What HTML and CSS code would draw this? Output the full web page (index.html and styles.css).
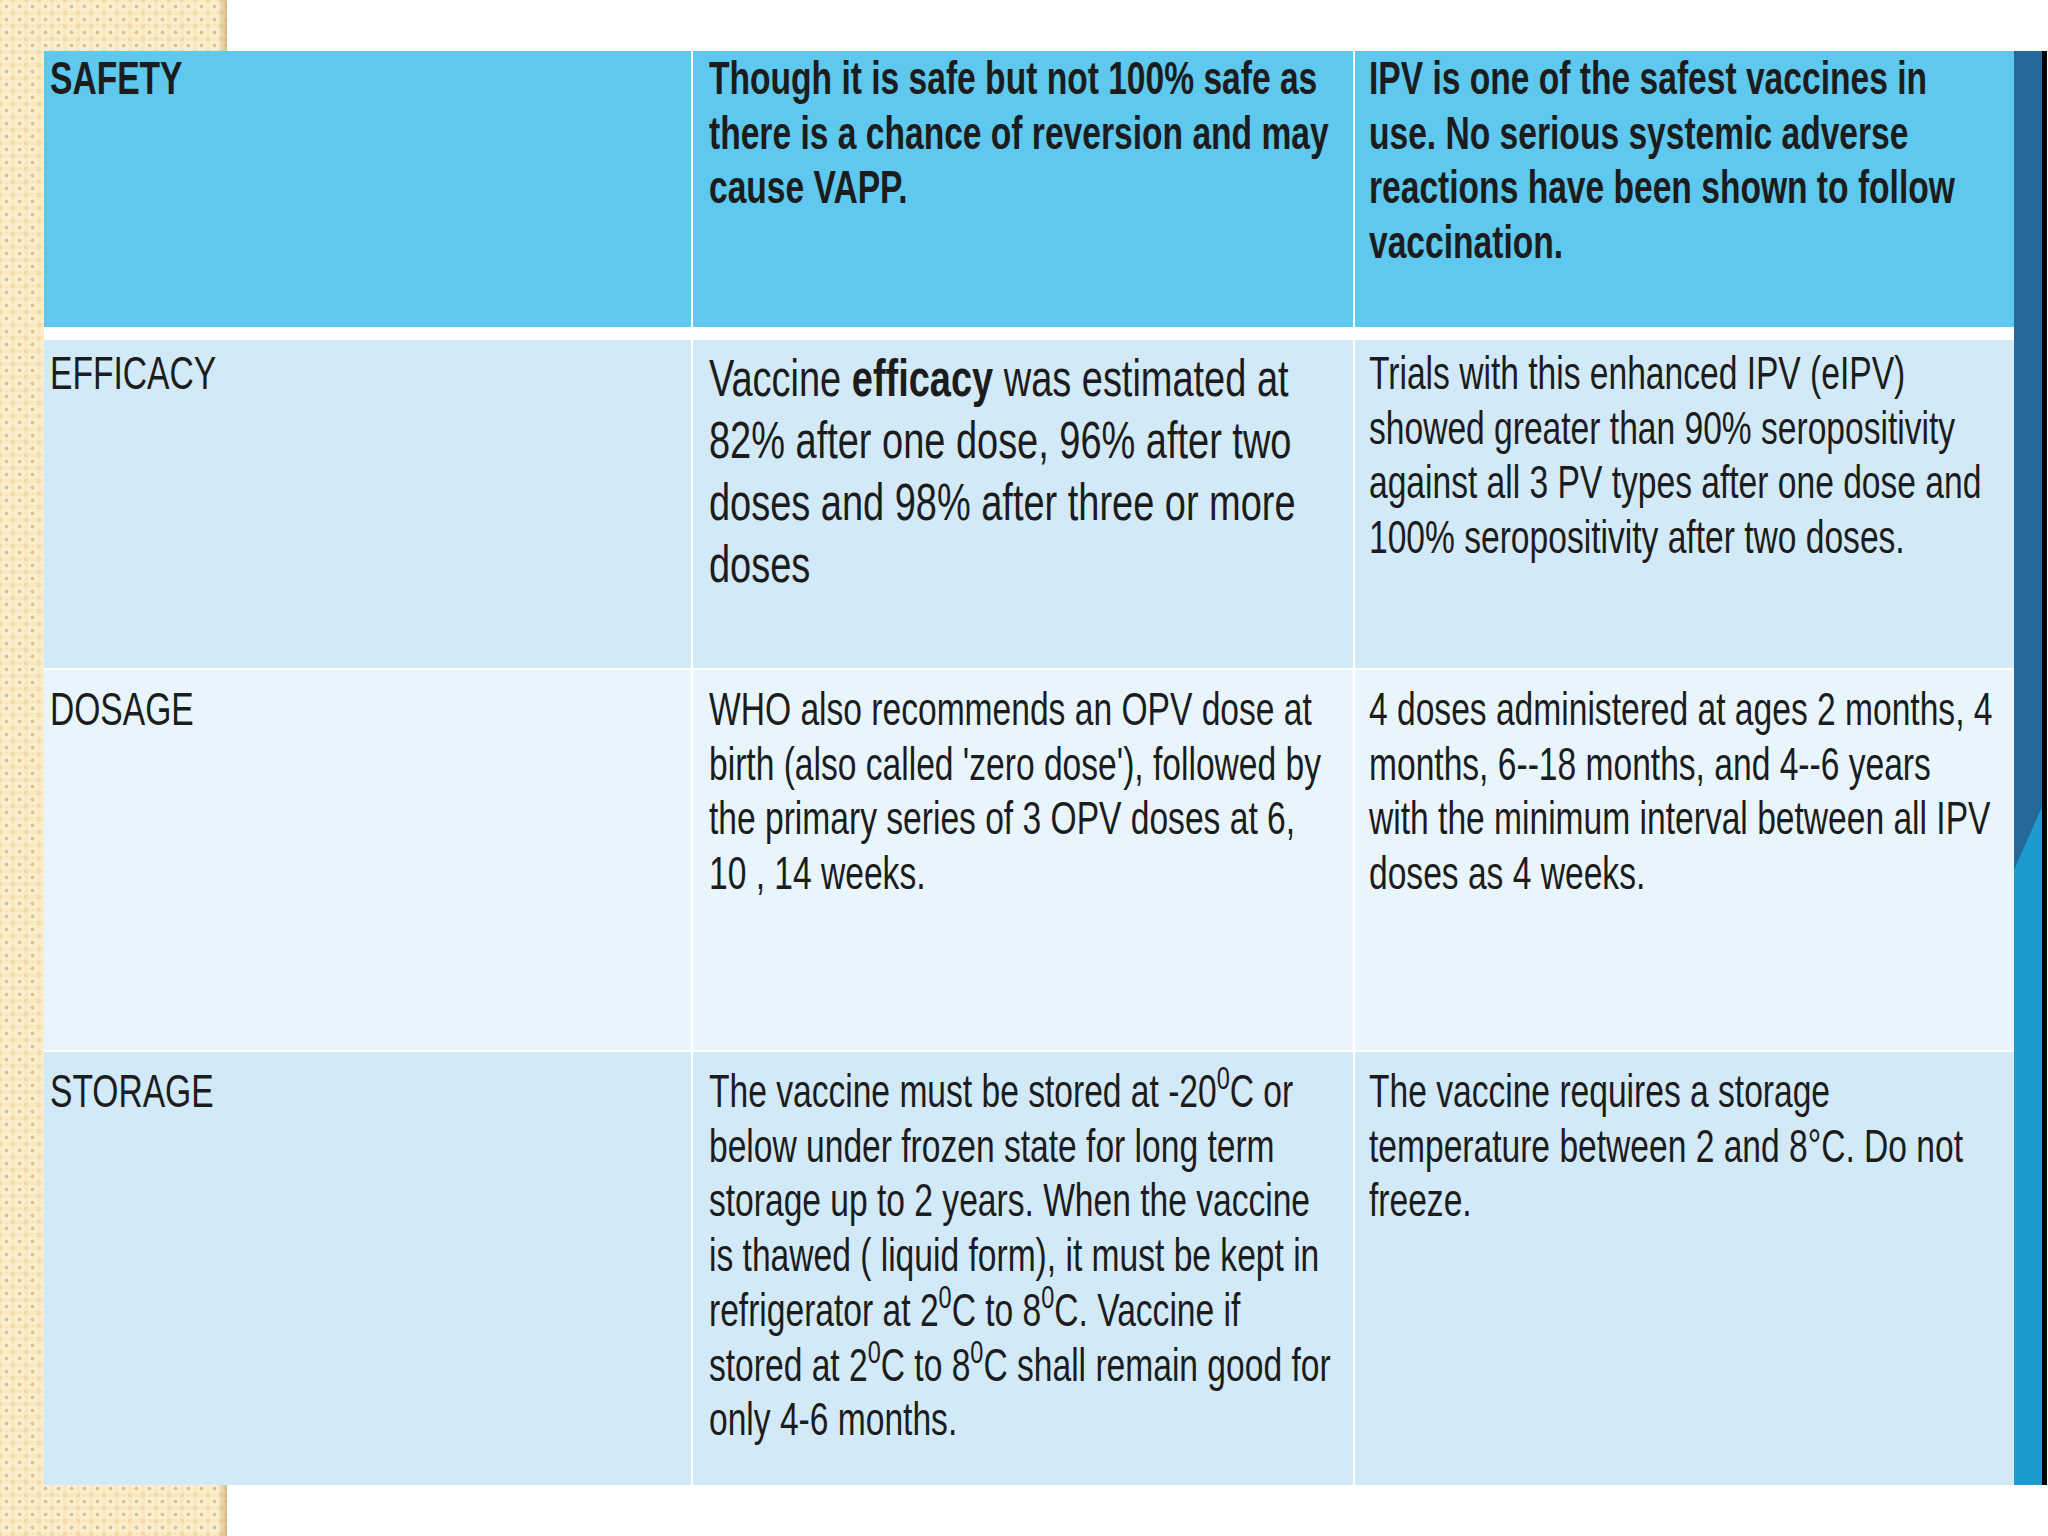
FILE: index.html
```html
<!DOCTYPE html>
<html lang="en">
<head>
<meta charset="utf-8">
<title>OPV vs IPV</title>
<link rel="stylesheet" href="styles.css">
</head>
<body>
<div class="page">
  <div class="slide">
    <div class="table">
      <div class="row row-head">
        <div class="cell c1"><span class="txt b">SAFETY</span></div>
        <div class="cell c2"><span class="txt b">Though it is safe but not 100% safe as<br>there is a chance of reversion and may<br>cause VAPP.</span></div>
        <div class="cell c3"><span class="txt b">IPV is one of the safest vaccines in<br>use. No serious systemic adverse<br>reactions have been shown to follow<br>vaccination.</span></div>
      </div>
      <div class="row row-eff">
        <div class="cell c1"><span class="txt">EFFICACY</span></div>
        <div class="cell c2 big"><span class="txt">Vaccine <b>efficacy</b> was estimated at<br>82% after one dose, 96% after two<br>doses and 98% after three or more<br>doses</span></div>
        <div class="cell c3"><span class="txt">Trials with this enhanced IPV (eIPV)<br>showed greater than 90% seropositivity<br>against all 3 PV types after one dose and<br>100% seropositivity after two doses.</span></div>
      </div>
      <div class="row row-dose">
        <div class="cell c1"><span class="txt">DOSAGE</span></div>
        <div class="cell c2"><span class="txt">WHO also recommends an OPV dose at<br>birth (also called 'zero dose'), followed by<br>the primary series of 3 OPV doses at 6,<br>10 , 14 weeks.</span></div>
        <div class="cell c3"><span class="txt">4 doses administered at ages 2 months, 4<br>months, 6--18 months, and 4--6 years<br>with the minimum interval between all IPV<br>doses as 4 weeks.</span></div>
      </div>
      <div class="row row-store">
        <div class="cell c1"><span class="txt">STORAGE</span></div>
        <div class="cell c2"><span class="txt">The vaccine must be stored at -20<sup>0</sup>C or<br>below under frozen state for long term<br>storage up to 2 years. When the vaccine<br>is thawed ( liquid form), it must be kept in<br>refrigerator at 2<sup>0</sup>C to 8<sup>0</sup>C. Vaccine if<br>stored at 2<sup>0</sup>C to 8<sup>0</sup>C shall remain good for<br>only 4-6 months.</span></div>
        <div class="cell c3"><span class="txt">The vaccine requires a storage<br>temperature between 2 and 8°C. Do not<br>freeze.</span></div>
      </div>
    </div>
    <div class="band">
      <svg class="band-svg" viewBox="0 0 28 1434" preserveAspectRatio="none" aria-hidden="true">
        <rect x="0" y="0" width="28" height="1434" fill="#1d9bcf"/>
        <polygon points="0,0 28,0 28,756 0,819" fill="#25699b"/>
      </svg>
    </div>
    <div class="edge"></div>
  </div>
</div>
</body>
</html>
```

FILE: styles.css
```css
html, body {
  margin: 0;
  padding: 0;
  background: #ffffff;
}

.page {
  width: 2048px;
  height: 1536px;
  overflow: hidden;
  background-color: #f2dba6;
  background-image:
    linear-gradient(90deg, rgba(0,0,0,0) 0, rgba(0,0,0,0) 218px, rgba(185,155,95,0.6) 227px, #ffffff 227px, #ffffff 100%),
    radial-gradient(circle at 50% 50%, rgba(214,188,130,0.85) 0, rgba(214,188,130,0.85) 1.8px, rgba(0,0,0,0) 2.2px),
    linear-gradient(90deg, rgba(0,0,0,0) 0, rgba(0,0,0,0) 2px, rgba(255,246,222,0.5) 2px, rgba(255,246,222,0.5) 11px, rgba(0,0,0,0) 11px),
    linear-gradient(rgba(0,0,0,0) 0, rgba(0,0,0,0) 2px, rgba(255,246,222,0.5) 2px, rgba(255,246,222,0.5) 11px, rgba(0,0,0,0) 11px);
  background-size: 100% 100%, 13px 13px, 13px 13px, 13px 13px;
  background-repeat: no-repeat, repeat, repeat, repeat;
  font-family: "Liberation Sans", Arial, sans-serif;
  color: #1c1c1c;
}

.slide {
  display: flex;
  margin-left: 44px;
  padding-top: 51px;
  height: 1434px;
}

.table {
  width: 1970px;
  display: flex;
  flex-direction: column;
  background: #ffffff;
}

.row {
  display: grid;
  grid-template-columns: 647px 660px 659px;
  column-gap: 2px;
  background: #ffffff;
}

.row-head { height: 276px; margin-bottom: 13px; }
.row-eff { height: 328px; margin-bottom: 2px; }
.row-dose { height: 380px; margin-bottom: 2px; }
.row-store { height: 433px; }

.row-head .cell { background: #5ec8ee; padding-top: 0; }
.row-eff .cell { background: #d2e9f8; padding-top: 6px; }
.row-dose .cell { background: #e8f5fd; padding-top: 12px; }
.row-store .cell { background: #d2e9f8; padding-top: 12px; }

.cell {
  overflow: hidden;
  font-size: 46px;
  line-height: 1.19;
}

.c1 { padding-left: 6px; }
.c2 { padding-left: 16px; }
.c3 { padding-left: 14px; }

.row-eff .big {
  font-size: 52px;
  padding-top: 8px;
}

.txt {
  display: block;
  white-space: nowrap;
  transform: scaleX(0.73);
  transform-origin: 0 0;
}

.b, .txt b { font-weight: bold; }

sup {
  font-size: 0.7em;
  line-height: 0;
  vertical-align: 0.55em;
}

.band {
  width: 28px;
  height: 1434px;
}

.band-svg {
  display: block;
  width: 28px;
  height: 1434px;
}

.edge {
  width: 5px;
  height: 1434px;
  background: #050505;
}
```
